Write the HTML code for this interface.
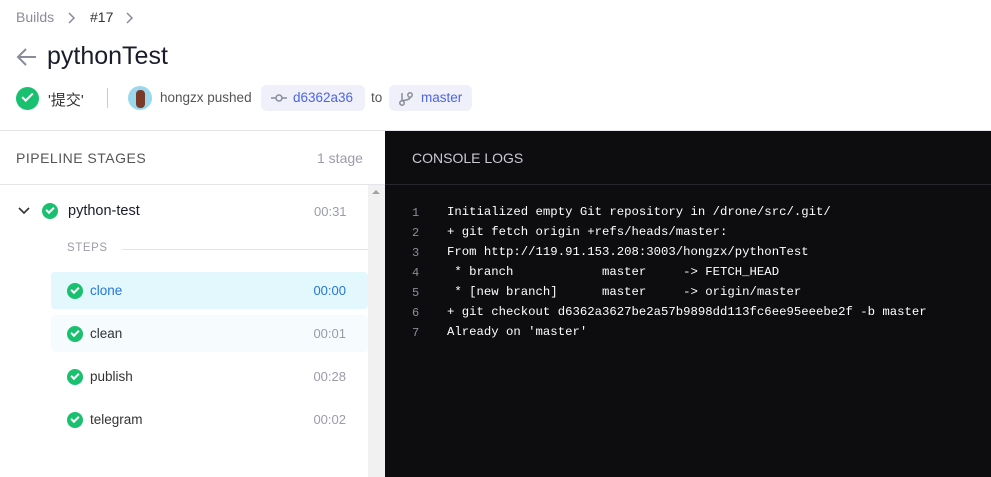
<!DOCTYPE html><html><head><meta charset="utf-8"><style>
*{margin:0;padding:0;box-sizing:border-box}
body{width:991px;height:477px;overflow:hidden;background:#fff;font-family:"Liberation Sans","Noto Sans CJK SC",sans-serif;position:relative;color:#1f2133}
.a{position:absolute;white-space:nowrap}
.chk{position:absolute;width:16px;height:16px;border-radius:50%;background:#19c06f}
.chk:after{content:"";box-sizing:content-box;position:absolute;left:3.5px;top:3.5px;width:6px;height:3px;border-left:2px solid #fff;border-bottom:2px solid #fff;transform:rotate(-45deg)}
.big:after{left:5.5px;top:6px;width:9px;height:4px;border-width:2.5px}
.pill{position:absolute;height:26px;background:#f0f0fa;border-radius:6px;font-size:13.5px;color:#4c64e6;line-height:26px}
.mono{font-family:"Liberation Mono",monospace;font-size:12.3px;color:#fff}
.ln{position:absolute;left:412px;color:#8a8d9a;font-family:"Liberation Mono",monospace;font-size:12px}
.step{position:absolute;left:51px;width:317px;height:37px;border-radius:4px}
.step .chk{left:16px;top:11px}
.step .n{position:absolute;left:39px;top:11px;font-size:13.5px;color:#333}
.step .t{position:absolute;right:22px;top:11px;font-size:13px;color:#9a9ca8}
</style></head><body>
<div class="a" style="left:16px;top:9px;font-size:14px;color:#8a8c9a">Builds</div>
<svg class="a" style="left:66px;top:11px" width="10" height="14"><path d="M3 2l5 5-5 5" stroke="#8a8c9a" stroke-width="1.5" fill="none"/></svg>
<div class="a" style="left:90px;top:9px;font-size:14px;color:#333">#17</div>
<svg class="a" style="left:124px;top:11px" width="10" height="14"><path d="M3 2l5 5-5 5" stroke="#8a8c9a" stroke-width="1.5" fill="none"/></svg>
<svg class="a" style="left:16px;top:47px" width="22" height="20"><path d="M2 10h18M10 2l-8 8 8 8" stroke="#8a8c9a" stroke-width="2" fill="none"/></svg>
<div class="a" style="left:47px;top:42px;font-size:25px;color:#1a1c2b">pythonTest</div>
<div class="chk big" style="left:16px;top:87px;width:23px;height:23px"></div>
<div class="a" style="left:48px;top:89px;font-size:15px;color:#333">'提交'</div>
<div class="a" style="left:107px;top:88px;width:1px;height:20px;background:#ccc"></div>
<div class="a" style="left:128px;top:86px;width:24px;height:24px;border-radius:50%;background:#9ad8ee"></div>
<div class="a" style="left:136px;top:90px;width:9px;height:18px;border-radius:4px;background:#7a3a28"></div>
<div class="a" style="left:160px;top:90px;font-size:13.5px;color:#555">hongzx pushed</div>
<div class="pill" style="left:261px;top:85px;width:104px"><svg class="a" style="left:10px;top:8px" width="16" height="10"><path d="M0 5h5M11 5h5" stroke="#8a8c9a" stroke-width="1.5"/><circle cx="8" cy="5" r="3" stroke="#8a8c9a" stroke-width="1.5" fill="none"/></svg><span class="a" style="left:32px">d6362a36</span></div>
<div class="a" style="left:371px;top:90px;font-size:13.5px;color:#555">to</div>
<div class="pill" style="left:389px;top:85px;width:83px"><svg class="a" style="left:9px;top:6px" width="16" height="16"><circle cx="4" cy="12" r="2.2" stroke="#8a8c9a" stroke-width="1.5" fill="none"/><circle cx="12" cy="4" r="2.2" stroke="#8a8c9a" stroke-width="1.5" fill="none"/><path d="M4 2v8M12 6c0 4-8 3-8 4" stroke="#8a8c9a" stroke-width="1.5" fill="none"/></svg><span class="a" style="left:32px">master</span></div>
<div class="a" style="left:0;top:130px;width:991px;height:1px;background:#e4e4ea"></div>
<div class="a" style="left:16px;top:150px;font-size:14px;color:#555;letter-spacing:.5px">PIPELINE STAGES</div>
<div class="a" style="left:317px;top:150px;font-size:14px;color:#9a9ca8">1 stage</div>
<div class="a" style="left:0;top:184px;width:385px;height:1px;background:#e4e4ea"></div>
<div class="a" style="left:368px;top:185px;width:17px;height:292px;background:#f1f1f1"></div>
<svg class="a" style="left:372px;top:189px" width="8" height="6"><path d="M0 5l4-4 4 4z" fill="#a3a3a3"/></svg>
<svg class="a" style="left:18px;top:206px" width="12" height="10"><path d="M1 2l5 5 5-5" stroke="#333" stroke-width="1.6" fill="none"/></svg>
<div class="chk" style="left:42px;top:203px"></div>
<div class="a" style="left:68px;top:203px;font-size:14.5px;color:#1a1c2b">python-test</div>
<div class="a" style="left:314px;top:204px;font-size:13px;color:#9a9ca8">00:31</div>
<div class="a" style="left:67px;top:242px;font-size:11.5px;color:#9a9ca8;letter-spacing:.6px">STEPS</div>
<div class="a" style="left:122px;top:249px;width:246px;height:1px;background:#e4e4ea"></div>
<div class="step" style="top:272px;background:#e2f8fd"><div class="chk"></div><div class="n" style="color:#2476d8">clone</div><div class="t" style="color:#2476d8">00:00</div></div>
<div class="step" style="top:315px;background:#f6fcfe"><div class="chk"></div><div class="n">clean</div><div class="t">00:01</div></div>
<div class="step" style="top:358px"><div class="chk"></div><div class="n">publish</div><div class="t">00:28</div></div>
<div class="step" style="top:401px"><div class="chk"></div><div class="n">telegram</div><div class="t">00:02</div></div>
<div class="a" style="left:385px;top:131px;width:606px;height:346px;background:#0d0d10"></div>
<div class="a" style="left:412px;top:150px;font-size:14px;color:#c9cad4">CONSOLE LOGS</div>
<div class="a" style="left:385px;top:184px;width:606px;height:1px;background:#26272e"></div>
<div class="ln" style="top:206px">1</div><div class="a mono" style="left:447px;top:205px">Initialized empty Git repository in /drone/src/.git/</div>
<div class="ln" style="top:226px">2</div><div class="a mono" style="left:447px;top:225px">+ git fetch origin +refs/heads/master:</div>
<div class="ln" style="top:246px">3</div><div class="a mono" style="left:447px;top:245px">From http://119.91.153.208:3003/hongzx/pythonTest</div>
<div class="ln" style="top:266px">4</div><div class="a mono" style="left:447px;top:265px;white-space:pre"> * branch            master     -&gt; FETCH_HEAD</div>
<div class="ln" style="top:286px">5</div><div class="a mono" style="left:447px;top:285px;white-space:pre"> * [new branch]      master     -&gt; origin/master</div>
<div class="ln" style="top:306px">6</div><div class="a mono" style="left:447px;top:305px">+ git checkout d6362a3627be2a57b9898dd113fc6ee95eeebe2f -b master</div>
<div class="ln" style="top:326px">7</div><div class="a mono" style="left:447px;top:325px">Already on 'master'</div>
</body></html>
